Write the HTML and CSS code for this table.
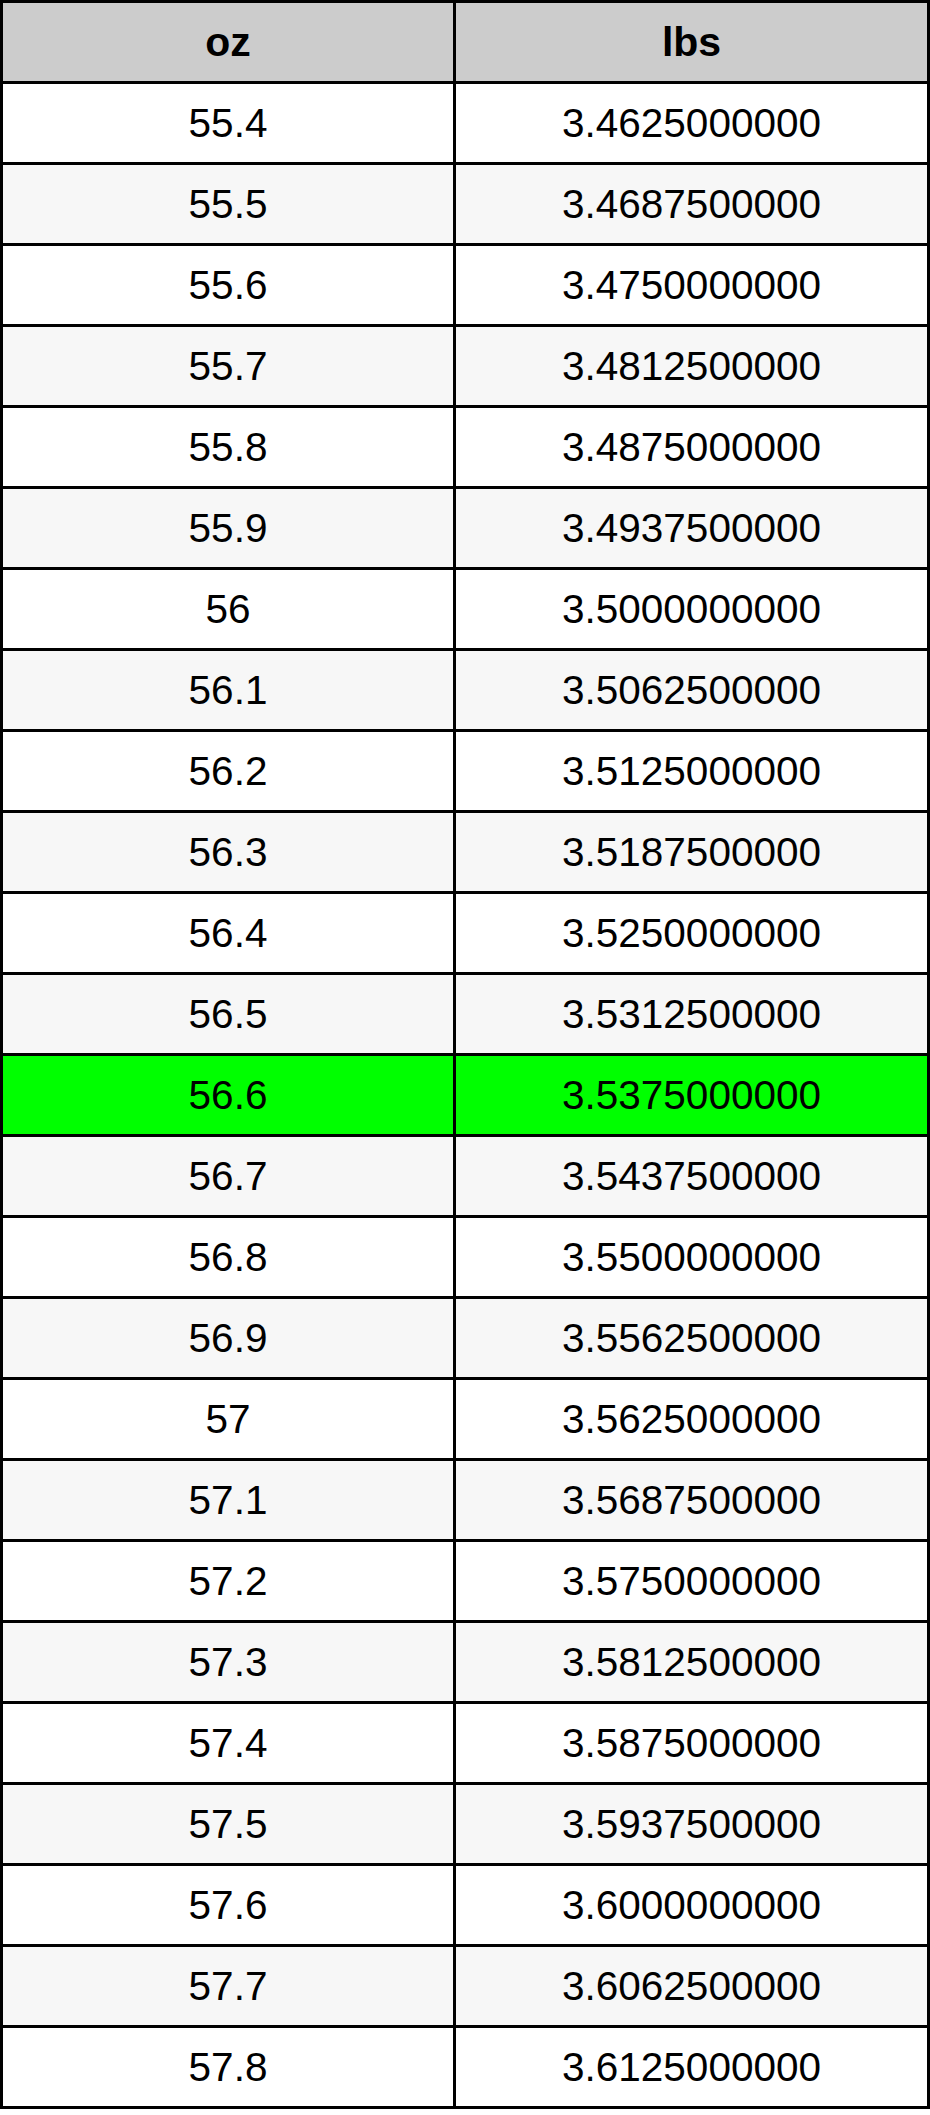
FILE: index.html
```html
<!DOCTYPE html>
<html>
<head>
<meta charset="utf-8">
<link rel="stylesheet" href="styles.css">
</head>
<body>
<table class="conv">
<thead>
<tr><th class="c1">oz</th><th class="c2">lbs</th></tr>
</thead>
<tbody>
<tr><td>55.4</td><td>3.4625000000</td></tr>
<tr class="alt"><td>55.5</td><td>3.4687500000</td></tr>
<tr><td>55.6</td><td>3.4750000000</td></tr>
<tr class="alt"><td>55.7</td><td>3.4812500000</td></tr>
<tr><td>55.8</td><td>3.4875000000</td></tr>
<tr class="alt"><td>55.9</td><td>3.4937500000</td></tr>
<tr><td>56</td><td>3.5000000000</td></tr>
<tr class="alt"><td>56.1</td><td>3.5062500000</td></tr>
<tr><td>56.2</td><td>3.5125000000</td></tr>
<tr class="alt"><td>56.3</td><td>3.5187500000</td></tr>
<tr><td>56.4</td><td>3.5250000000</td></tr>
<tr class="alt"><td>56.5</td><td>3.5312500000</td></tr>
<tr class="hl"><td>56.6</td><td>3.5375000000</td></tr>
<tr class="alt"><td>56.7</td><td>3.5437500000</td></tr>
<tr><td>56.8</td><td>3.5500000000</td></tr>
<tr class="alt"><td>56.9</td><td>3.5562500000</td></tr>
<tr><td>57</td><td>3.5625000000</td></tr>
<tr class="alt"><td>57.1</td><td>3.5687500000</td></tr>
<tr><td>57.2</td><td>3.5750000000</td></tr>
<tr class="alt"><td>57.3</td><td>3.5812500000</td></tr>
<tr><td>57.4</td><td>3.5875000000</td></tr>
<tr class="alt"><td>57.5</td><td>3.5937500000</td></tr>
<tr><td>57.6</td><td>3.6000000000</td></tr>
<tr class="alt"><td>57.7</td><td>3.6062500000</td></tr>
<tr><td>57.8</td><td>3.6125000000</td></tr>
</tbody>
</table>
</body>
</html>
```
FILE: styles.css
```css
html, body {
  margin: 0;
  padding: 0;
  background: #ffffff;
}
.conv {
  border-collapse: separate;
  border-spacing: 3px;
  background: #000000;
  width: 930px;
  font-family: "Liberation Sans", Arial, Helvetica, sans-serif;
  font-size: 40.5px;
  color: #000000;
  table-layout: fixed;
}
.conv th, .conv td {
  height: 78px;
  padding: 0;
  text-align: center;
  vertical-align: middle;
  background: #ffffff;
}
.conv th {
  background: #cccccc;
  font-weight: bold;
  font-size: 41px;
}
.conv .c1 { width: 450px; }
.conv .c2 { width: 471px; }
.conv tr.alt td { background: #f7f7f7; }
.conv tr.hl td { background: #00ff00; }
```
